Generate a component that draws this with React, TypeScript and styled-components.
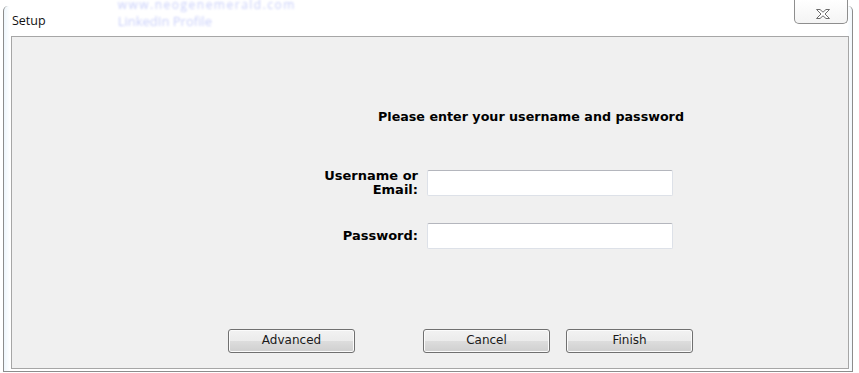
import React from "react";
import styled, { createGlobalStyle } from "styled-components";

const Global = createGlobalStyle`
  html, body { margin: 0; padding: 0; background: #ffffff; }
  body { width: 859px; height: 373px; overflow: hidden; }
`;

const Screen = styled.div`
  width: 859px;
  height: 373px;
  box-sizing: border-box;
  padding-left: 3px;
  padding-top: 6px;
  background: #ffffff;
`;

const Frame = styled.div`
  position: relative;
  width: 850px;
  height: 366px;
  box-sizing: border-box;
  border: 1px solid #8c8c8c;
  border-top: none;
  border-radius: 5px 5px 0 0;
  background: linear-gradient(90deg, #eef6fc 0px, #ffffff 6px, #ffffff 843px, #eef6fc 849px);
  display: flex;
  flex-direction: column;
  padding: 0 3px 2px 7px;
`;

const TitleBar = styled.div`
  height: 30px;
  display: flex;
  align-items: flex-start;
  flex-shrink: 0;
`;

const Title = styled.span`
  font-family: "Open Sans", "DejaVu Sans", sans-serif;
  font-size: 12.5px;
  color: #111111;
  margin-top: 6px;
  margin-left: 1px;
  line-height: 17px;
`;

const Ghost = styled.div`
  margin-left: 72px;
  margin-top: -9px;
  display: flex;
  flex-direction: column;
  font-family: "Open Sans", sans-serif;
  color: #5c6ff0;
  opacity: 0.33;
  filter: blur(1.2px);
`;

const GhostLine = styled.span<{ $size: number; $spacing?: number }>`
  font-size: ${(p) => p.$size}px;
  line-height: ${(p) => p.$size + 4}px;
  letter-spacing: ${(p) => p.$spacing ?? 0}px;
  white-space: nowrap;
`;

const CloseButton = styled.div`
  position: absolute;
  top: -6px;
  right: 4px;
  width: 54px;
  height: 24px;
  box-sizing: border-box;
  border: 1px solid #8e8e8e;
  border-top: none;
  border-radius: 0 0 5px 5px;
  background: linear-gradient(#ffffff, #f4f4f4);
  display: flex;
  align-items: center;
  justify-content: center;
  padding-top: 4px;
  padding-left: 4px;
`;

const Panel = styled.div`
  flex: 1;
  background: #f0f0f0;
  border: 1px solid #a6a6a6;
  display: flex;
  flex-direction: column;
  padding: 72px 0 15px 0;
  font-family: "DejaVu Sans", Verdana, sans-serif;
  color: #000;
`;

const Heading = styled.div`
  font-weight: bold;
  font-size: 12.7px;
  line-height: 15px;
  margin-left: 366px;
  margin-bottom: 45px;
  white-space: nowrap;
`;

const Form = styled.div`
  display: grid;
  grid-template-columns: 100px 246px;
  column-gap: 9px;
  row-gap: 26px;
  align-items: center;
  margin-left: 306px;
`;

const Label = styled.label`
  font-weight: bold;
  font-size: 13px;
  line-height: 14px;
  text-align: right;
  white-space: nowrap;
`;

const Input = styled.input`
  box-sizing: border-box;
  height: 26px;
  width: 246px;
  border: 1px solid #dde1e8;
  border-top-color: #b4b6bd;
  border-radius: 2px;
  background: #ffffff;
  outline: none;
  padding: 0 4px;
`;

const ButtonRow = styled.div`
  margin-top: auto;
  margin-left: 216px;
  display: flex;
  align-items: center;
`;

const Button = styled.button<{ $gap?: number }>`
  width: 127px;
  height: 24px;
  box-sizing: border-box;
  margin-left: ${(p) => p.$gap ?? 0}px;
  border: 1px solid #707070;
  border-radius: 3px;
  background: linear-gradient(#f2f2f2 0%, #ebebeb 50%, #dddddd 50%, #cfcfcf 100%);
  box-shadow: inset 0 0 0 1px #fbfbfb;
  font-family: "DejaVu Sans", Verdana, sans-serif;
  font-size: 12px;
  color: #1a1a1a;
  padding: 0 0 3px 0;
  line-height: 18px;
`;

const CloseIcon = () => (
  <svg width="16" height="12" viewBox="0 0 16 12">
    <path
      d="M1.5 1.5 L5 1.5 L8 4.2 L11 1.5 L14.5 1.5 L10 6 L14.5 10.5 L11 10.5 L8 7.8 L5 10.5 L1.5 10.5 L6 6 Z"
      fill="#ffffff"
      stroke="#6c6c6c"
      strokeWidth="1"
      strokeLinejoin="round"
    />
  </svg>
);

export default function App() {
  return (
    <>
      <Global />
      <Screen>
        <Frame>
          <TitleBar>
            <Title>Setup</Title>
            <Ghost aria-hidden="true">
              <GhostLine $size={12} $spacing={1.5}>www.neogenemerald.com</GhostLine>
              <GhostLine $size={13}>LinkedIn Profile</GhostLine>
            </Ghost>
          </TitleBar>
          <CloseButton>
            <CloseIcon />
          </CloseButton>
          <Panel>
            <Heading>Please enter your username and password</Heading>
            <Form>
              <Label htmlFor="user">
                Username or
                <br />
                Email:
              </Label>
              <Input id="user" type="text" />
              <Label htmlFor="pass">Password:</Label>
              <Input id="pass" type="password" />
            </Form>
            <ButtonRow>
              <Button>Advanced</Button>
              <Button $gap={68}>Cancel</Button>
              <Button $gap={16}>Finish</Button>
            </ButtonRow>
          </Panel>
        </Frame>
      </Screen>
    </>
  );
}
